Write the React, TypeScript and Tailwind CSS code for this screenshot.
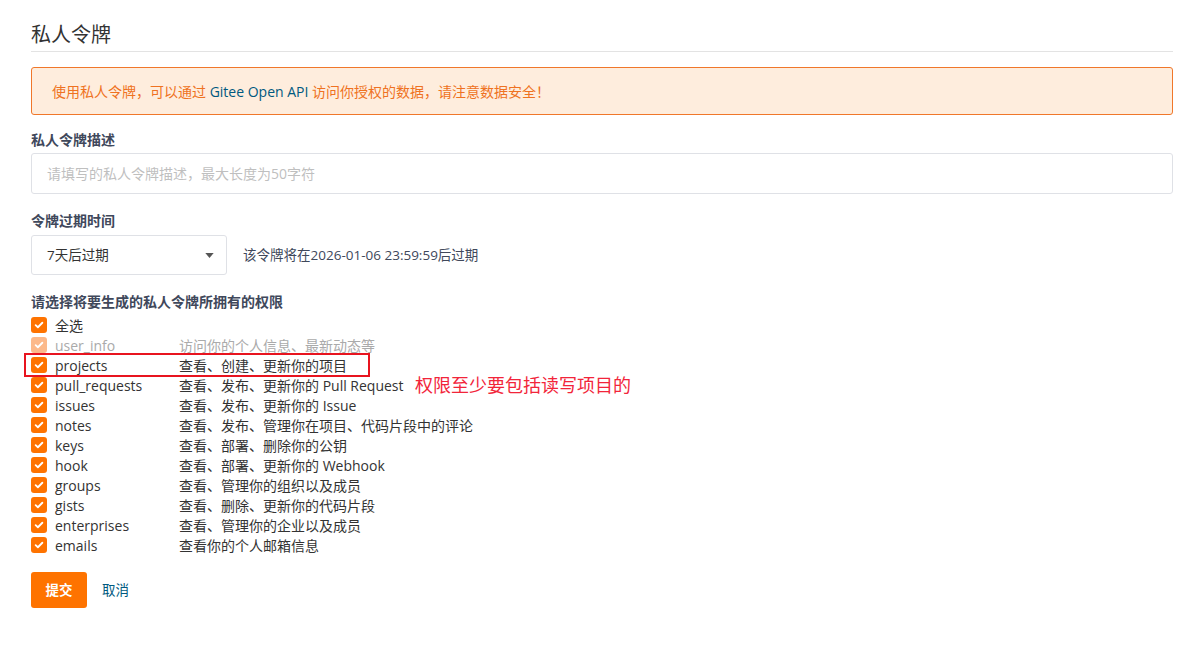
import React from "react";

const PERMS = [
  { name: "user_info", desc: "访问你的个人信息、最新动态等", disabled: true },
  { name: "projects", desc: "查看、创建、更新你的项目" },
  { name: "pull_requests", desc: "查看、发布、更新你的 Pull Request" },
  { name: "issues", desc: "查看、发布、更新你的 Issue" },
  { name: "notes", desc: "查看、发布、管理你在项目、代码片段中的评论" },
  { name: "keys", desc: "查看、部署、删除你的公钥" },
  { name: "hook", desc: "查看、部署、更新你的 Webhook" },
  { name: "groups", desc: "查看、管理你的组织以及成员" },
  { name: "gists", desc: "查看、删除、更新你的代码片段" },
  { name: "enterprises", desc: "查看、管理你的企业以及成员" },
  { name: "emails", desc: "查看你的个人邮箱信息" },
];

function Check({ faded }: { faded?: boolean }) {
  return (
    <span
      className={`flex h-4 w-4 shrink-0 items-center justify-center rounded-[3px] ${
        faded ? "bg-[#fcb98a]" : "bg-[#fe7300]"
      }`}
    >
      <svg viewBox="0 0 16 16" className="h-3 w-3">
        <path d="M3.5 8.2l3 2.8 6-6" fill="none" stroke="#fff" strokeWidth="2.4" strokeLinecap="round" strokeLinejoin="round" />
      </svg>
    </span>
  );
}

export default function App() {
  return (
    <div
      className="min-h-screen bg-white pl-[31px] pr-[20px] text-[14px] text-[#40485b]"
      style={{ fontFamily: '"Open Sans", "Noto Sans CJK SC", sans-serif' }}
    >
      <h1 className="border-b border-[#e3e3e3] pb-[3px] pt-[22px] text-[20px] font-normal leading-[26px] text-[#333]">私人令牌</h1>

      <div className="mt-[15px] flex h-[48px] items-center rounded-[3px] border border-[#f0772a] bg-[#feeddd] px-[20px] text-[14px] text-[#ef7221]">
        使用私人令牌，可以通过&nbsp;<span className="text-[#005980]">Gitee Open API</span>&nbsp;访问你授权的数据，请注意数据安全！
      </div>

      <div className="mt-[15px] text-[14px] font-bold leading-[20px] text-[#40485b]">私人令牌描述</div>
      <div className="mt-[3px] flex h-[41px] items-center rounded-[3px] border border-[#dfe1e6] px-[15px] text-[14px] text-[#bfbfbf]">
        请填写的私人令牌描述，最大长度为50字符
      </div>

      <div className="mt-[17px] text-[14px] font-bold leading-[20px] text-[#40485b]">令牌过期时间</div>
      <div className="mt-[4px] flex items-center gap-[16px]">
        <div className="flex h-[40px] w-[196px] items-center justify-between rounded-[3px] border border-[#dfe1e6] pl-[15px] pr-[12px] text-[13.5px] text-[#333]">
          <span>7天后过期</span>
          <svg viewBox="0 0 10 6" className="h-[5px] w-[9px]">
            <path d="M0 0h10L5 6z" fill="#555" />
          </svg>
        </div>
        <span className="text-[13.5px] text-[#40485b]">该令牌将在2026-01-06 23:59:59后过期</span>
      </div>

      <div className="mt-[17px] text-[14px] font-bold leading-[20px] text-[#40485b]">请选择将要生成的私人令牌所拥有的权限</div>
      <div className="mt-[3px] flex flex-col">
        <div className="flex h-[20px] items-center gap-[8px]">
          <Check />
          <span className="text-[#333]">全选</span>
        </div>
        {PERMS.map((p) => (
          <div key={p.name} className="relative flex h-[20px] items-center">
            <Check faded={p.disabled} />
            <span className={`ml-[8px] w-[124px] ${p.disabled ? "text-[#aaa]" : "text-[#333]"}`}>{p.name}</span>
            <span className={p.disabled ? "text-[#aaa]" : "text-[#333]"}>{p.desc}</span>
            {p.name === "projects" && (
              <span className="pointer-events-none absolute left-[-7px] top-[-2px] h-[24px] w-[346px] border-2 border-[#e8141f]" />
            )}
            {p.name === "pull_requests" && (
              <span className="absolute left-[384px] top-[-4px] whitespace-nowrap text-[18px] leading-[28px] text-[#f2253a]">权限至少要包括读写项目的</span>
            )}
          </div>
        ))}
      </div>

      <div className="mt-[17px] flex items-center gap-[15px]">
        <button className="h-[36px] w-[56px] rounded-[3px] bg-[#fe7300] text-[13.5px] font-bold text-white">提交</button>
        <span className="text-[13.5px] text-[#005980]">取消</span>
      </div>
    </div>
  );
}
